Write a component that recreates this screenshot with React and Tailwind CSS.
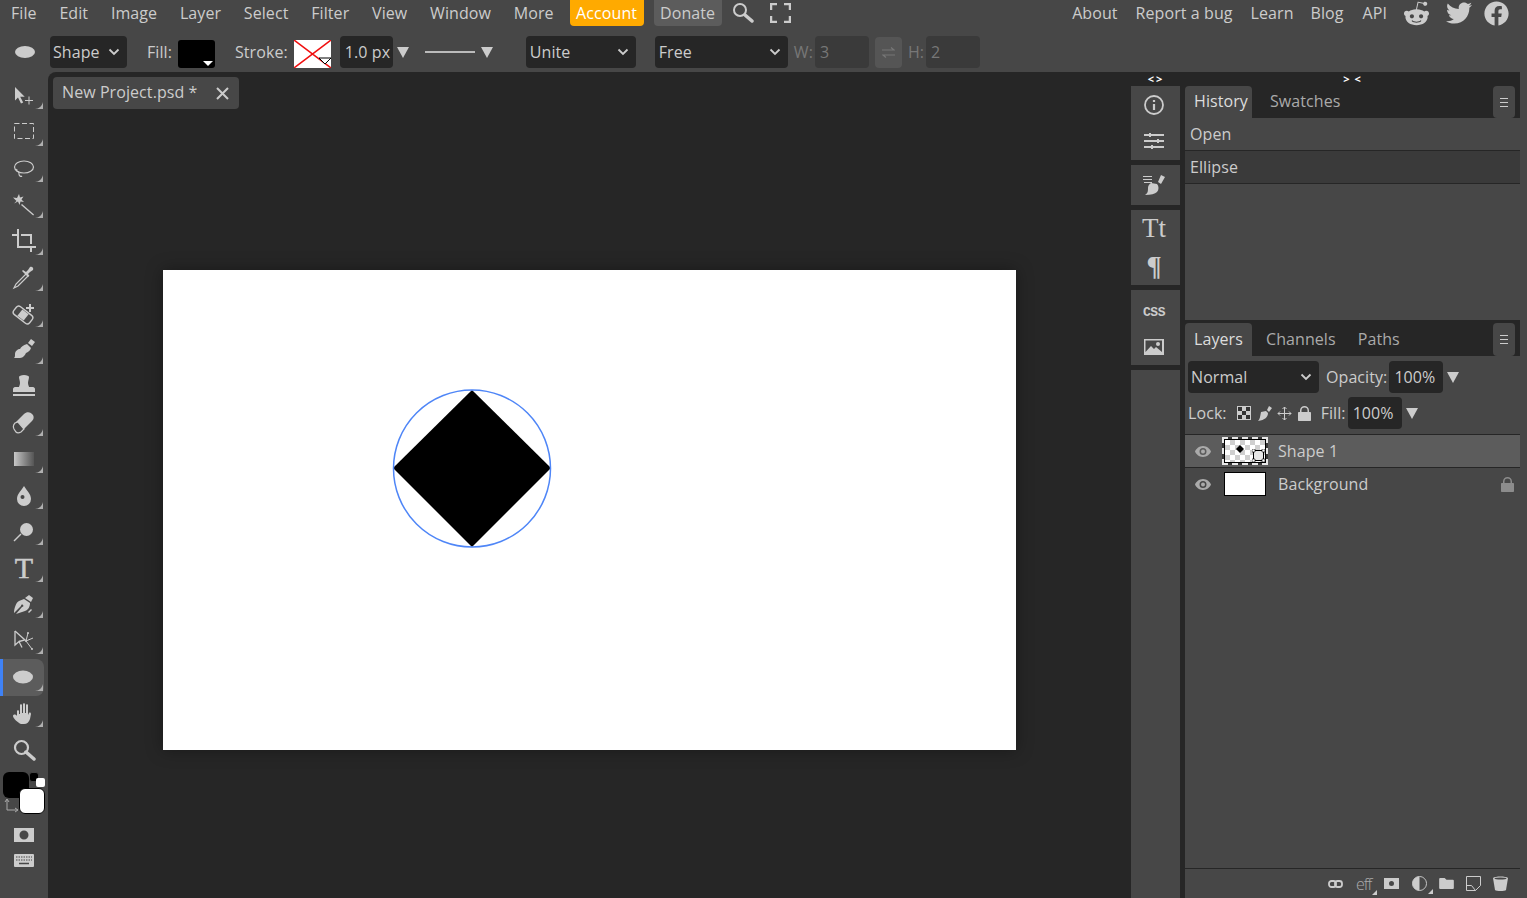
import React from 'react';
import { FaRedditAlien, FaTwitter, FaFacebook } from 'react-icons/fa';

const Chevron = () => (
    <svg width="12" height="8" viewBox="0 0 12 8" fill="none" stroke="#ccc" strokeWidth="1.8"><path d="M1.5 1.5 6 6l4.5-4.5" /></svg>
);

const Tri = ({ cls = '' }) => (
    <svg width="12" height="11" viewBox="0 0 12 11" className={cls}><path d="M0 0h12L6 11z" fill="#ccc" /></svg>
);

// small triangle in the corner of tools with a flyout
const Corner = () => (
    <svg width="8" height="7" viewBox="0 0 8 7" className="absolute right-[1px] bottom-[5px]"><path d="M8 0v7H0C4 7 7 4 8 0z" fill="#b0b0b0" /></svg>
);

const Ico = ({ children }) => (
    <svg width="24" height="24" viewBox="0 0 24 24" fill="#ccc">{children}</svg>
);

const tools = [
    { c: 1, i: <Ico><path d="M3 3v13.500l3-3 3 6 2.200-1-3-5.700h4.500z" /><path d="M16.500 12.500h1v3.500h3.500v1h-3.500v3.500h-1v-3.500h-3.500v-1h3.500z" /></Ico> },
    { c: 1, i: <Ico><rect x="2.500" y="3.500" width="19" height="15" fill="none" stroke="#ccc" strokeDasharray="5 2.500" /></Ico> },
    { c: 1, i: <Ico><ellipse cx="12" cy="10" rx="9.500" ry="6" fill="none" stroke="#ccc" strokeWidth="1.200" /><path d="M5 12c-2 3 3 2 2 5 0 2 2 3 3 2" fill="none" stroke="#ccc" strokeWidth="1.200" /></Ico> },
    { c: 1, i: <Ico><path d="M7 1l1 3.500 3.500-1-2 3 2.500 2.500-3.500-.5-1 3.500-1.500-3.500L2 10.500l2.500-2.500L1 4.500l4 .5z" /><path d="M10 11l12 10.500-.8 1L9 12z" /></Ico> },
    { c: 1, i: <Ico><path d="M5 0h2v17h17v2h-4v4h-2v-4H5V7H0V5h5zM9 5h11v10h-2V7H9z" /></Ico> },
    { c: 1, i: <Ico><path d="M15 7 4 18l-2 4 4-2L17 9" fill="none" stroke="#ccc" strokeWidth="1.200" /><path d="M14 6l2-2 2-3c2-1 4 1 3 3l-3 2-2 2 1 2-1 1-6-6 1-1z" /></Ico> },
    { c: 1, i: <Ico><g transform="rotate(38 11 13)"><rect x="1" y="8" width="20" height="10" rx="3" fill="none" stroke="#ccc" strokeWidth="1.400" /><rect x="7" y="9" width="8" height="8" /></g><path d="M17 2h2v3h3v2h-3v3h-2V7h-3V5h3z" /></Ico> },
    { c: 1, i: <Ico><path d="M15 6l4 4c-1 3-3 4-5 5-1 2-3 5-6 5H2c1-1 1-2 1-4 0-3 3-5 5-5 1-2 3-4 7-5zM16 5l3-4 4 3-3 4z" /></Ico> },
    { c: 0, i: <Ico><path d="M7 2c0-1 2-2 5-2s5 1 5 2c0 2-1 4-1 6 0 2 1 3 1 4h4c1 0 2 1 2 2v3H1v-3c0-1 1-2 2-2h4c0-1 1-2 1-4 0-2-1-4-1-6zM1 19h22v2H1z" /></Ico> },
    { c: 1, i: <Ico><path d="M12 3c3-3 7-2 9 1 1 2 1 4-1 6l-8 8H7l-3-3v-4z" /><path d="M3 12c-2 2-2 4-1 6l2 3c1 1 3 1 5 0l3-3-6-7z" fill="#474747" stroke="#ccc" strokeWidth="1.200" /></Ico> },
    { c: 1, i: <svg width="20" height="14" className="bg-gradient-to-r from-[#c8c8c8] to-[#555]" /> },
    { c: 1, i: <Ico><path d="M12 2c3 5 7 8 7 13a7 7 0 0 1-14 0C5 10 9 7 12 2z" /><circle cx="10.500" cy="13" r="2" fill="#474747" /></Ico> },
    { c: 1, i: <Ico><circle cx="14.500" cy="9.500" r="6.500" /><path d="M9 14 2 21" stroke="#ccc" strokeWidth="1.500" /></Ico> },
    { c: 1, i: <span className="font-['Liberation_Serif'] text-[30px] leading-none text-[#ccc] [-webkit-text-stroke:0.5px_#ccc]">T</span> },
    { c: 1, i: <Ico><path d="M17 2l4 3-2 4-6-4zM12 6l6 4c0 4-2 7-5 8l-9 3 6-7c1 0 2-1 1-2s-2 0-2 1l-7 7c0-4 2-11 5-12z" /><path d="M16 19l3-3 1 1-3 3z" /></Ico> },
    { c: 1, i: <Ico><path d="M3 2v14l4-3.500 3 6" fill="none" stroke="#ccc" strokeWidth="1.300" /><path d="M3 2l10 9-6 1.500" fill="none" stroke="#ccc" strokeWidth="1.300" /><path d="M16 4l-2 8 7-3M14 12l6 8" fill="none" stroke="#ccc" /><circle cx="16" cy="4" r="1" /><circle cx="14" cy="12" r="1" /><circle cx="20" cy="20" r="1" /></Ico> },
    { c: 1, active: 1, i: <Ico><ellipse cx="11" cy="12" rx="10" ry="6.500" /></Ico> },
    { c: 1, i: <Ico><path d="M5 14V9c0-1 2-1 2 0v3h1V3c0-1 2-1 2 0v8h1V2c0-1 2-1 2 0v9h1V3c0-1 2-1 2 0v10l1-2c1-1 2 0 2 1l-1 5c-1 3-3 5-6 5H9c-3-1-8-6-8-8 0-2 3-2 4 0z" /></Ico> },
    { c: 0, i: <Ico><circle cx="9.500" cy="9.500" r="6.500" fill="none" stroke="#ccc" strokeWidth="2.200" /><path d="M14 14l8 7" stroke="#ccc" strokeWidth="3.500" strokeLinecap="round" /></Ico> },
];

const Toolbar = () => (
    <div className="w-12 shrink-0 flex flex-col pt-[6px]">
        {tools.map((t, idx) => (
            <div key={idx} className={`relative w-11 h-[36.33px] flex items-center justify-center ${t.active ? 'bg-[#5c5c5c] rounded-r-lg border-l-[3px] border-[#3f82f6]' : 'pl-[4px]'}`}>
                {t.i}
                {t.c ? <Corner /> : null}
            </div>
        ))}
        <div className="relative h-[50px] mt-[4px] shrink-0">
            <div className="absolute left-[3px] top-0 w-[26px] h-[26px] rounded-md bg-black" />
            <div className="absolute left-[29px] top-0 w-[10px] h-[10px] rounded-[3px] bg-black border border-[#444]" />
            <div className="absolute left-[36px] top-[6px] w-[9px] h-[9px] rounded-[2px] bg-white" />
            <div className="absolute left-[19px] top-[16px] w-[26px] h-[26px] rounded-md bg-white border border-black" />
            <svg width="15" height="15" viewBox="0 0 15 15" fill="none" stroke="#aaa" className="absolute left-[4px] top-[26px]"><path d="M3 2v10h10M1 4l2-3 2 3M11 10l3 2-3 2" /></svg>
        </div>
        <div className="flex flex-col items-center w-12 gap-[12px] mt-[6px]">
            <svg width="20" height="14" viewBox="0 0 20 14"><path fillRule="evenodd" d="M0 0h20v14H0zM10 2.500a4.500 4.500 0 1 0 0 9 4.500 4.500 0 0 0 0-9z" fill="#ccc" /></svg>
            <svg width="20" height="13" viewBox="0 0 20 13"><rect width="20" height="13" rx="1" fill="#ccc" /><path d="M2 3h16M2 6h16" stroke="#474747" strokeDasharray="1.500 1" /><path d="M5 9.500h10" stroke="#474747" strokeWidth="1.500" /></svg>
        </div>
    </div>
);

const Select = ({ label, w, pl = 'pl-[4px]' }) => (
    <div className={`${w} h-8 bg-[#262626] rounded flex items-center justify-between ${pl} pr-[7px]`}>
        <span>{label}</span>
        <Chevron />
    </div>
);

const Field = ({ value, w = 'w-[54px]', off }) => (
    <div className={`${w} h-8 rounded flex items-center pl-[5px] ${off ? 'bg-[#3a3a3a] text-[#777]' : 'bg-[#262626]'}`}>{value}</div>
);

const TopBar = () => (
    <div className="h-[72px] shrink-0 flex flex-col">
        <div className="h-[26px] flex items-center relative">
            <div className="flex items-center h-full pl-[11px] gap-[22.75px]">
                {['File', 'Edit', 'Image', 'Layer', 'Select', 'Filter', 'View', 'Window', 'More'].map((m) => (
                    <span key={m}>{m}</span>
                ))}
            </div>
            <div className="h-full ml-[16px] w-[74px] justify-center bg-[#ffaa00] text-white rounded-b flex items-center">Account</div>
            <div className="h-full ml-[10px] w-[68px] justify-center bg-[#5c5c5c] rounded-b flex items-center">Donate</div>
            <svg width="22" height="22" viewBox="0 0 22 22" fill="none" stroke="#ccc" className="ml-[10px]"><circle cx="8" cy="8" r="6" strokeWidth="2" /><path d="M13 13l7 6" strokeWidth="3.500" strokeLinecap="round" /></svg>
            <svg width="21" height="20" viewBox="0 0 21 20" fill="none" stroke="#ccc" strokeWidth="2.500" className="ml-[16px]"><path d="M1 7V1h6M14 1h6v6M20 13v6h-6M7 19H1v-6" /></svg>
            <div className="ml-auto flex items-center pr-[18px]">
                <span>About</span>
                <span className="ml-[18px]">Report a bug</span>
                <span className="ml-[18px]">Learn</span>
                <span className="ml-[17px]">Blog</span>
                <span className="ml-[19px]">API</span>
                <FaRedditAlien size={27} color="#ccc" className="ml-[16px]" />
                <FaTwitter size={26} color="#ccc" className="ml-[16px]" />
                <FaFacebook size={25} color="#ccc" className="ml-[12px]" />
            </div>
        </div>
        <div className="h-8 mt-[10px] flex items-center">
            <svg width="20" height="12" viewBox="0 0 20 12" className="ml-[15px]"><ellipse cx="10" cy="6" rx="10" ry="6" fill="#ccc" /></svg>
            <div className="ml-[15px]"><Select label="Shape" w="w-[77px]" pl="pl-[3px]" /></div>
            <span className="ml-[20px]">Fill:</span>
            <div className="relative ml-[6px] w-[37px] h-7 bg-black rounded-[3px] mt-[4px]">
                <svg width="10" height="5" viewBox="0 0 10 5" className="absolute right-[2px] bottom-[2px]"><path d="M0 0h10L5 5z" fill="#fff" /></svg>
            </div>
            <span className="ml-[20px]">Stroke:</span>
            <svg width="37" height="28" viewBox="0 0 37 28" className="ml-[6px] mt-[4px]">
                <rect width="37" height="28" fill="#fff" />
                <path d="M0 0 37 28M37 0 0 28" stroke="#f01010" strokeWidth="1.500" />
                <path d="M25 18h12l-6 6z" fill="#fff" stroke="#000" />
            </svg>
            <div className="ml-[9px]"><Field value="1.0 px" w="w-[53px]" /></div>
            <Tri cls="ml-[4px]" />
            <div className="ml-[16px] w-[50px] h-[1.500px] bg-[#bbb]" />
            <Tri cls="ml-[6px]" />
            <div className="ml-[33px]"><Select label="Unite" w="w-[110px]" /></div>
            <div className="ml-[19px]"><Select label="Free" w="w-[133px]" /></div>
            <span className="ml-[6px] text-[#777]">W:</span>
            <div className="ml-[2px]"><Field value="3" off /></div>
            <div className="ml-[6px] w-[27px] h-[31px] bg-[#555] rounded flex items-center justify-center">
                <svg width="13" height="11" viewBox="0 0 13 11" fill="none" stroke="#777" strokeWidth="1.200"><path d="M0 3h12L9 .5M13 8H1l3 2.500" /></svg>
            </div>
            <span className="ml-[6px] text-[#777]">H:</span>
            <div className="ml-[2px]"><Field value="2" off /></div>
        </div>
    </div>
);

const Workspace = () => (
    <div className="flex-1 min-w-0 flex flex-col">
        <div className="h-[50px] shrink-0 pl-[5px] pt-[5px]">
            <div className="w-[186px] h-8 bg-[#474747] rounded flex items-center justify-between pl-[9px] pr-[10px] pb-[2px]">
                <span>New Project.psd *</span>
                <svg width="13" height="13" viewBox="0 0 13 13" stroke="#ccc" strokeWidth="2" className="mt-[2px]"><path d="M1 1l11 11M12 1 1 12" /></svg>
            </div>
        </div>
        <div className="flex-1 flex items-center justify-center">
            <svg width="853" height="480" viewBox="0 0 853 480" className="bg-white shadow-[0_0_16px_rgba(0,0,0,0.35)]">
                <path d="M309 120 388 198 309 277 230 198z" fill="#000" />
                <circle cx="309" cy="198.500" r="78.500" fill="none" stroke="#4f86f7" strokeWidth="1.500" />
            </svg>
        </div>
    </div>
);

const SideGroup = ({ h, children }) => (
    <div className={`${h} bg-[#474747] flex flex-col items-center justify-around w-[49px] pr-[3px] shrink-0`}>{children}</div>
);

const IconStrip = () => (
    <div className="w-[50px] shrink-0 flex flex-col">
        <div className="h-[14px] text-[11px] leading-[14px] text-white text-center font-bold tracking-[2px]">&lt;&gt;</div>
        <div className="flex flex-col gap-[5px] flex-1">
            <SideGroup h="h-[74px]">
                <svg width="22" height="22" viewBox="0 0 22 22" fill="none" stroke="#ccc" strokeWidth="1.800"><circle cx="11" cy="11" r="9" /><path d="M11 10v6M11 6v2" strokeWidth="2.200" /></svg>
                <svg width="22" height="16" viewBox="0 0 22 16" stroke="#ccc" strokeWidth="2" className="mb-[3px]"><path d="M1 2h20M1 8h20M1 14h20" /><path d="M7 0v4M15 6v4M9 12v4" strokeWidth="2" /></svg>
            </SideGroup>
            <SideGroup h="h-[40px]">
                <svg width="22" height="22" viewBox="0 0 22 22" fill="#ccc"><path d="M0 2h9v1H0zM0 5h9v1H0zM1 8h8v1H1z" /><path d="M15 8l3-7 4 2-4 7zM8 9l6 1c2 2 2 6 0 8-2 2-6 3-12 3 3-2 3-4 3-7 0-2 1-4 3-5z" /></svg>
            </SideGroup>
            <SideGroup h="h-[75px]">
                <span className="font-['Liberation_Serif'] text-[27px] leading-none text-[#ccc]">Tt</span>
                <span className="font-['Liberation_Serif'] text-[28px] leading-none font-bold text-[#ccc]">¶</span>
            </SideGroup>
            <SideGroup h="h-[75px]">
                <span className="font-['Liberation_Mono'] text-[13px] leading-none font-bold text-[#ccc] mt-[6px] tracking-[-0.5px] uppercase">CSS</span>
                <svg width="20" height="16" viewBox="0 0 20 16"><path fillRule="evenodd" d="M0 0h20v16H0zM1.500 13l5.500-6 3 3 2-2 6 5V1.500h-16.500z" fill="#ccc" /><circle cx="14" cy="5" r="2" fill="#ccc" /></svg>
            </SideGroup>
            <div className="flex-1 bg-[#474747] w-[49px]" />
        </div>
    </div>
);

const PanelTabs = ({ tabs, h = 'h-8' }) => (
    <div className={`${h} shrink-0 bg-[#262626] flex items-stretch justify-between pr-[5px]`}>
        <div className="flex items-center">
            {tabs.map((t, i) => (
                i === 0
                    ? <div key={t} className="w-[67px] h-full bg-[#474747] rounded-t flex items-center pl-[9px] pb-[2px] text-[#ddd]">{t}</div>
                    : <span key={t} className={`pb-[2px] text-[#aaa] ${t === 'Swatches' ? 'ml-[18px]' : i === 1 ? 'ml-[14px]' : 'ml-[22px]'}`}>{t}</span>
            ))}
        </div>
        <div className="w-[22px] bg-[#474747] rounded flex flex-col items-center justify-center gap-[3px]">
            <div className="w-[8px] h-px bg-[#ccc]" />
            <div className="w-[8px] h-px bg-[#ccc]" />
            <div className="w-[8px] h-px bg-[#ccc]" />
        </div>
    </div>
);

const Eye = () => (
    <svg width="16" height="11" viewBox="0 0 16 11" className="ml-[10px] mr-[9px] shrink-0">
        <path fillRule="evenodd" d="M8 0c4 0 7 3 8 5.500-1 2.500-4 5.500-8 5.500S1 8 0 5.500C1 3 4 0 8 0zm0 2a3.500 3.500 0 1 0 0 7 3.500 3.500 0 0 0 0-7z" fill="#aaa" />
        <circle cx="8" cy="5.500" r="2" fill="#aaa" />
    </svg>
);

const LockIcon = ({ c = '#ccc', w = 13, h = 15 }) => (
    <svg width={w} height={h} viewBox="0 0 13 15" fill={c}><path fillRule="evenodd" d="M1 6h1V4.500a4.500 4.500 0 0 1 9 0V6h1c.6 0 1 .4 1 1v7c0 .6-.4 1-1 1H1c-.6 0-1-.4-1-1V7c0-.6.4-1 1-1zm2.500 0h6V4.500a3 3 0 0 0-6 0z" /></svg>
);

const FootCorner = () => (
    <svg width="5" height="5" viewBox="0 0 5 5" className="absolute right-[-6px] bottom-[-3px]"><path d="M5 0v5H0z" fill="#ccc" /></svg>
);

const Panels = () => (
    <div className="w-[335px] ml-[4px] shrink-0 flex flex-col">
        <div className="h-[14px] text-[11px] leading-[14px] text-white text-center font-bold tracking-[1px]">&gt; &lt;</div>
        <div className="h-[234px] bg-[#474747] flex flex-col shrink-0">
            <PanelTabs tabs={['History', 'Swatches']} />
            <div className="h-[33px] flex items-center pl-[5px] border-b border-[#262626]">Open</div>
            <div className="h-[33px] flex items-center pl-[5px] bg-[#3a3a3a] border-b border-[#262626]">Ellipse</div>
        </div>
        <div className="flex-1 mt-[3px] bg-[#474747] flex flex-col">
            <PanelTabs tabs={['Layers', 'Channels', 'Paths']} h="h-[33px]" />
            <div className="flex items-center h-8 mt-[5px] pl-[3px]">
                <Select label="Normal" w="w-[131px]" pl="pl-[3px]" />
                <span className="ml-[7px]">Opacity:</span>
                <div className="ml-[2px]"><Field value="100%" /></div>
                <Tri cls="ml-[4px]" />
            </div>
            <div className="flex items-center h-8 mt-[4px] pl-[3px]">
                <span>Lock:</span>
                <svg width="14" height="14" viewBox="0 0 14 14" className="ml-[10px]"><rect x=".5" y=".5" width="13" height="13" fill="#ccc" stroke="#ccc" /><path d="M1 1h4v4H1zM9 1h4v4H9zM5 5h4v4H5zM1 9h4v4H1zM9 9h4v4H9z" fill="#333" /></svg>
                <svg width="14" height="15" viewBox="0 0 14 15" fill="#ccc" className="ml-[7px]"><path d="M9 4l2-4 3 2-3 4zM3 6l5-1 2 2c0 4-3 7-10 8 2-2 2-4 3-9z" /></svg>
                <svg width="15" height="15" viewBox="0 0 15 15" fill="none" stroke="#ccc" className="ml-[5px]"><path d="M7.500 1v13M1 7.500h13M5.500 3l2-2 2 2M5.500 12l2 2 2-2M3 5.500l-2 2 2 2M12 5.500l2 2-2 2" /></svg>
                <div className="ml-[6px]"><LockIcon /></div>
                <span className="ml-[10px]">Fill:</span>
                <div className="ml-[2px]"><Field value="100%" /></div>
                <Tri cls="ml-[4px]" />
            </div>
            <div className="mt-[5px] border-t border-[#262626]">
                <div className="h-[33px] bg-[#5c5c5c] border-b border-[#262626] flex items-center">
                    <Eye />
                    <div className="relative w-[46px] h-[28px] shrink-0 ml-[2px] bg-[#3a3a3a] border-2 border-dashed border-[#e8e8e8]">
                        <div className="w-full h-full border border-black bg-[length:10px_10px] bg-[repeating-conic-gradient(#cfcfcf_0_25%,#fff_0_50%)]" />
                        <svg width="8" height="8" viewBox="0 0 8 8" className="absolute left-[12px] top-[6px]"><path d="M4 0l4 4-4 4-4-4z" fill="#000" /></svg>
                        <svg width="13" height="13" viewBox="0 0 13 13" className="absolute left-[28px] top-[10px]"><rect x="1.500" y="1.500" width="10" height="10" fill="#e8e8e8" stroke="#000" /><path d="M0 0h3v3H0zM10 0h3v3h-3zM0 10h3v3H0zM10 10h3v3h-3z" fill="#fff" stroke="#000" strokeWidth=".6" /></svg>
                    </div>
                    <span className="ml-[10px]">Shape 1</span>
                </div>
                <div className="h-8 flex items-center pr-[6px]">
                    <Eye />
                    <div className="w-[42px] h-[24px] bg-white border border-black shrink-0 ml-[4px]" />
                    <span className="ml-[12px]">Background</span>
                    <div className="ml-auto"><LockIcon c="#8c8c8c" /></div>
                </div>
            </div>
            <div className="mt-auto h-[30px] border-t border-[#262626] flex items-center justify-end gap-[12px] pr-[12px]">
                <svg width="15" height="8" viewBox="0 0 15 8" fill="none" stroke="#ccc" strokeWidth="1.800"><rect x="1" y="1" width="7" height="6" rx="2.500" /><rect x="7" y="1" width="7" height="6" rx="2.500" /></svg>
                <span className="relative ml-[1px] text-[16px] leading-none text-[#aaa] w-[15px] tracking-[-1px] font-light">eff<FootCorner /></span>
                <svg width="15" height="11" viewBox="0 0 15 11" className="ml-[1px]"><path fillRule="evenodd" d="M0 0h15v11H0zM7.500 3a2.500 2.500 0 1 0 0 5 2.500 2.500 0 0 0 0-5z" fill="#ccc" /></svg>
                <span className="relative ml-[1px] w-[15px] h-[15px]">
                    <svg width="15" height="15" viewBox="0 0 16 16"><circle cx="8" cy="8" r="7.500" fill="#474747" stroke="#ccc" /><path d="M8 .5a7.500 7.500 0 0 0 0 15z" fill="#ccc" /></svg>
                    <FootCorner />
                </span>
                <svg width="15" height="11" viewBox="0 0 16 12"><path d="M0 1c0-.6.4-1 1-1h5l2 2h7c.6 0 1 .4 1 1v8c0 .6-.4 1-1 1H1c-.6 0-1-.4-1-1z" fill="#ccc" /></svg>
                <svg width="15" height="15" viewBox="0 0 15 15" fill="none" stroke="#ccc"><path d="M.5.5h14v9l-5 5H.5z" /><path d="M.5 9.500h5l4 5" /></svg>
                <svg width="15" height="15" viewBox="0 0 15 15" fill="#ccc"><path d="M0 2c2-2 13-2 15 0l-2 12c-1 1.300-10 1.300-11 0z" /><ellipse cx="7.500" cy="2.500" rx="6" ry="1" fill="#474747" /></svg>
            </div>
        </div>
    </div>
);

const App = () => {
    return (
        <div className="h-screen w-full overflow-hidden flex flex-col bg-[#474747] text-[#ccc] text-base tracking-[0.08px] font-['Open_Sans',sans-serif]">
            <TopBar />
            <div className="flex-1 min-h-0 flex">
                <Toolbar />
                <div className="flex-1 min-w-0 flex bg-[#262626] rounded-tl-lg">
                    <Workspace />
                    <IconStrip />
                    <Panels />
                </div>
                <div className="w-[7px] shrink-0" />
            </div>
        </div>
    );
};

export default App;
